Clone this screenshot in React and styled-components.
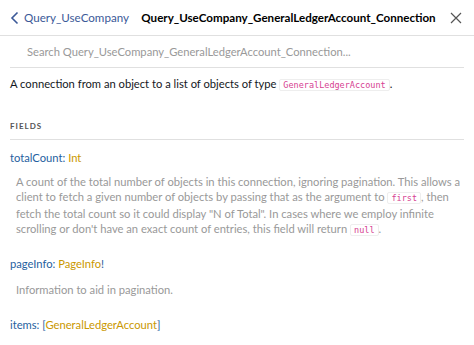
import React from 'react';
import styled, { createGlobalStyle } from 'styled-components';

const Global = createGlobalStyle`
  body {
    margin: 0;
    background: #fff;
    font-family: Lato, "Noto Sans", sans-serif;
  }
`;

const Panel = styled.div`
  width: 474px;
  height: 345px;
  overflow: hidden;
  background: #fff;
  color: #141823;
  font-size: 11.2px;
`;

const TitleBar = styled.div`
  display: flex;
  align-items: center;
  height: 36px;
  padding: 0 10px;
  border-bottom: 1px solid #e0e0e0;
  box-sizing: border-box;
`;

const Back = styled.div`
  display: flex;
  align-items: center;
  gap: 5px;
  color: #3b5998;
  font-size: 11.6px;
  white-space: nowrap;
`;

const Title = styled.div`
  flex: 1;
  text-align: center;
  font-weight: 700;
  font-size: 11.6px;
  color: #000;
  white-space: nowrap;
  padding: 0 8px;
`;

const Close = styled.div`
  width: 16px;
  display: flex;
  justify-content: center;
`;

const SearchRow = styled.div`
  margin: 0 10px;
  height: 31px;
  display: flex;
  align-items: center;
  padding-left: 17px;
  border-bottom: 1px solid #e0e0e0;
  color: #999;
`;

const Body = styled.div`
  padding: 0 10px;
`;

const Desc = styled.p`
  margin: ${p => p.m || '0'};
  color: ${p => (p.muted ? '#999' : '#141823')};
  padding-left: ${p => (p.indent ? '6px' : '0')};
  line-height: 15px;
`;

const Code = styled.code`
  font-family: "DejaVu Sans Mono", monospace;
  font-size: 8.5px;
  color: #d64292;
  border: 1px solid #eee;
  border-radius: 2px;
  padding: 0 3px;
  background: #fff;
`;

const SectionLabel = styled.div`
  margin-top: 28px;
  padding-bottom: 8px;
  border-bottom: 1px solid #e0e0e0;
  font-size: 8px;
  font-weight: 700;
  letter-spacing: 1px;
  color: #555;
`;

const Field = styled.div`
  margin-top: ${p => p.top || 12}px;
  color: #1f61a0;
`;

const Type = styled.span`
  color: #ca9800;
`;

const Arrow = () => (
  <svg width="9" height="14" viewBox="0 0 9 14">
    <path d="M7.5 1.5 L2 7 L7.5 12.5" fill="none" stroke="#3b5998" strokeWidth="1.6" />
  </svg>
);

const Cross = () => (
  <svg width="12" height="12" viewBox="0 0 12 12">
    <path d="M1 1 L11 11 M11 1 L1 11" fill="none" stroke="#555" strokeWidth="1.2" />
  </svg>
);

export default function App() {
  return (
    <Panel>
      <Global />
      <TitleBar>
        <Back><Arrow />Query_UseCompany</Back>
        <Title>Query_UseCompany_GeneralLedgerAccount_Connection</Title>
        <Close><Cross /></Close>
      </TitleBar>
      <SearchRow>Search Query_UseCompany_GeneralLedgerAccount_Connection...</SearchRow>
      <Body>
        <Desc m="8px 0 0">
          A connection from an object to a list of objects of type <Code>GeneralLedgerAccount</Code>.
        </Desc>
        <SectionLabel>FIELDS</SectionLabel>
        <Field top={11}>totalCount: <Type>Int</Type></Field>
        <Desc muted indent m="10px 0 0">
          A count of the total number of objects in this connection, ignoring pagination. This allows a
          client to fetch a given number of objects by passing that as the argument to <Code>first</Code>, then
          fetch the total count so it could display "N of Total". In cases where we employ infinite
          scrolling or don't have an exact count of entries, this field will return <Code>null</Code>.
        </Desc>
        <Field top={19}>pageInfo: <Type>PageInfo</Type>!</Field>
        <Desc muted indent m="12px 0 0">Information to aid in pagination.</Desc>
        <Field top={21}>items: [<Type>GeneralLedgerAccount</Type>]</Field>
      </Body>
    </Panel>
  );
}
